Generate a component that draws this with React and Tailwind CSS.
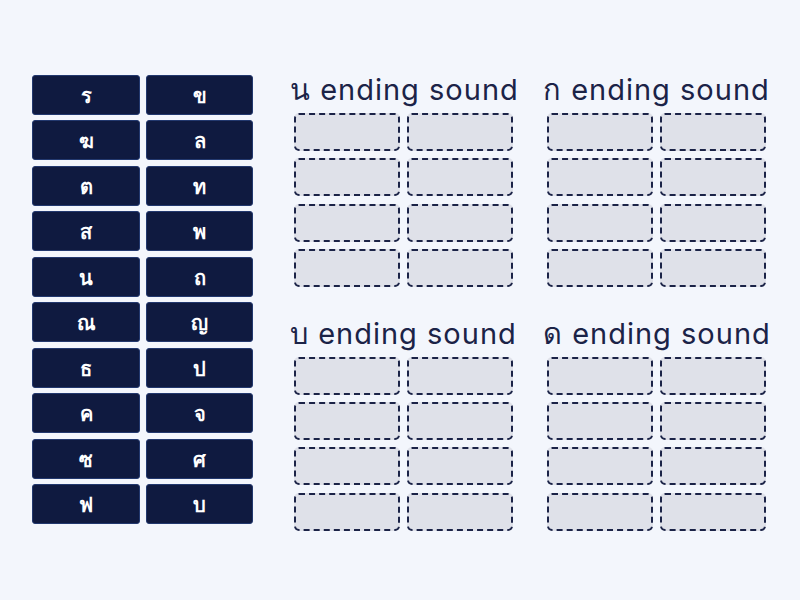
const tiles = [
  "ร", "ข",
  "ฆ", "ล",
  "ต", "ท",
  "ส", "พ",
  "น", "ถ",
  "ณ", "ญ",
  "ธ", "ป",
  "ค", "จ",
  "ซ", "ศ",
  "ฟ", "บ",
];

const groups = ["น", "ก", "บ", "ด"];

function DropGroup({ letter }) {
  return (
    <div className="flex flex-col w-[226px]">
      <div className="h-[38px] -mt-[5px] text-[29px] leading-[40px] tracking-[1px] text-[#1b2347] font-['Inter','Noto_Sans',sans-serif] whitespace-nowrap">
        {letter} ending sound
      </div>
      <div className="grid grid-cols-[106px_106px] gap-x-[7px] gap-y-[7.3px] pl-[4px] mt-[5px]">
        {Array.from({ length: 8 }).map((_, i) => (
          <div
            key={i}
            className="h-[38px] rounded-[5px] border-2 border-dashed border-[#1b2347] bg-[#dfe1e9]"
          />
        ))}
      </div>
    </div>
  );
}

export default function App() {
  return (
    <div className="w-[800px] h-[600px] bg-[#f3f6fc] flex items-start pt-[75px] pl-[32px] font-['Lato','Noto_Sans',sans-serif]">
      {/* Letter tiles */}
      <div className="grid grid-cols-[108px_107px] gap-x-[6px] gap-y-[5.45px]">
        {tiles.map((t, i) => (
          <div
            key={i}
            className="h-[40px] rounded-[3px] bg-[#0f1a40] border border-[#22386e] flex items-center justify-center text-white text-[20px] font-bold"
          >
            {t}
          </div>
        ))}
      </div>

      {/* Drop zones */}
      <div className="ml-[37px] grid grid-cols-[226px_226px] gap-x-[27px] gap-y-[32px]">
        {groups.map((g) => (
          <DropGroup key={g} letter={g} />
        ))}
      </div>
    </div>
  );
}
